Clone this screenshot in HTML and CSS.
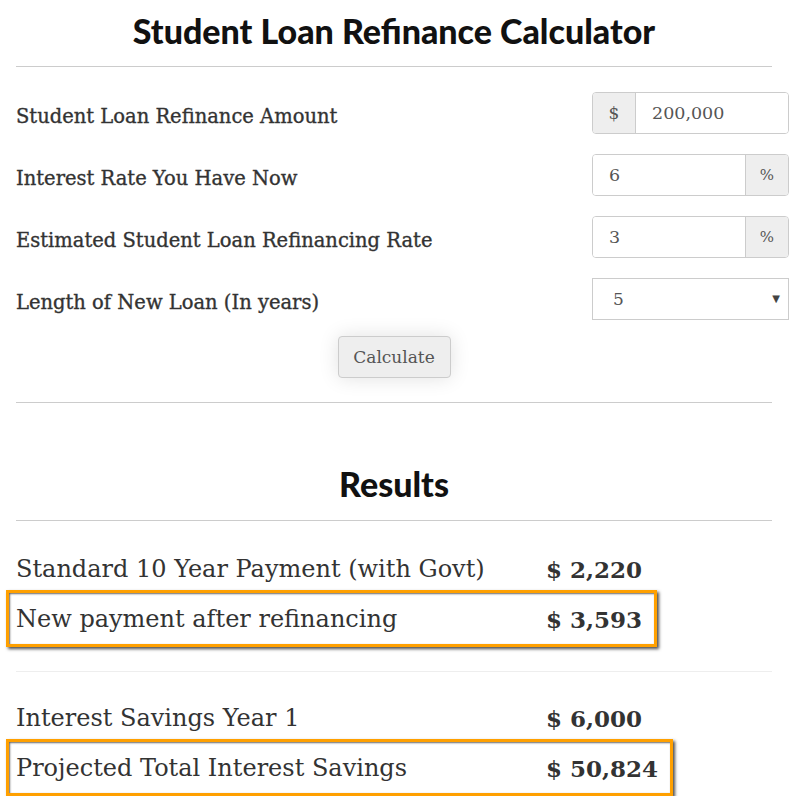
FILE: index.html
```html
<!DOCTYPE html>
<html lang="en">

<head>
    <meta charset="UTF-8">
    <meta name="viewport" content="width=device-width, initial-scale=1.0">
    <title>Student Loan Refinance Calculator</title>
    <link rel="stylesheet" href="styles.css">
</head>

<body>
    <div class="calculator">
        <h1 class="title">Student Loan Refinance Calculator</h1>
        <hr>

        <form class="calc-form">
            <div class="field">
                <label>Student Loan Refinance Amount</label>
                <div class="input-group">
                    <span class="addon">$</span>
                    <input type="text" value="200,000">
                </div>
            </div>
            <div class="field">
                <label>Interest Rate You Have Now</label>
                <div class="input-group">
                    <input type="text" value="6">
                    <span class="addon">%</span>
                </div>
            </div>
            <div class="field">
                <label>Estimated Student Loan Refinancing Rate</label>
                <div class="input-group">
                    <input type="text" value="3">
                    <span class="addon">%</span>
                </div>
            </div>
            <div class="field">
                <label>Length of New Loan (In years)</label>
                <div class="select-box">
                    <span class="select-value">5</span>
                    <span class="select-arrow">&#9660;</span>
                </div>
            </div>
            <div class="actions">
                <button type="button" class="btn">Calculate</button>
            </div>
        </form>

        <hr>

        <h2 class="title results-title">Results</h2>
        <hr>

        <div class="results">
            <div class="result">
                <span class="result-label">Standard 10 Year Payment (with Govt)</span>
                <span class="result-value">$ 2,220</span>
            </div>
            <div class="result highlight">
                <span class="result-label">New payment after refinancing</span>
                <span class="result-value">$ 3,593</span>
            </div>
            <hr class="light">
            <div class="result">
                <span class="result-label">Interest Savings Year 1</span>
                <span class="result-value">$ 6,000</span>
            </div>
            <div class="result highlight">
                <span class="result-label">Projected Total Interest Savings</span>
                <span class="result-value">$ 50,824</span>
            </div>
        </div>
    </div>
</body>

</html>
```

FILE: styles.css
```css
body {
    margin: 0;
    padding: 0;
    background: #fff;
    color: #333;
    font-family: "DejaVu Serif", "Liberation Serif", serif;
}

.calculator {
    width: 756px;
    padding: 0 16px;
}

.title {
    margin: 11px 0 14px;
    font-family: Lato, "Open Sans", sans-serif;
    font-size: 34px;
    font-weight: 900;
    line-height: 1.2;
    text-align: center;
    color: #111;
}

hr {
    margin: 0;
    border: none;
    border-top: 1px solid #ccc;
}

hr.light {
    border-top-color: #eee;
    margin: 24px 0 28px;
}

/* formulier */
.calc-form {
    display: flex;
    flex-direction: column;
    gap: 20px;
    padding: 25px 0 24px;
    margin-right: -17px;
}

.field {
    display: flex;
    justify-content: space-between;
    align-items: center;
}

.field label {
    padding-top: 8px;
    font-size: 19.5px;
    font-weight: 400;
    color: #333;
    -webkit-text-stroke: 0.35px #333;
}

.input-group {
    display: flex;
    width: 195px;
    height: 40px;
    border: 1px solid #ccc;
    border-radius: 4px;
    overflow: hidden;
}

.input-group input {
    flex: 1;
    min-width: 0;
    border: none;
    padding: 0 16px;
    font-family: inherit;
    font-size: 17.5px;
    color: #555;
    outline: none;
}

.addon {
    width: 42px;
    display: flex;
    align-items: center;
    justify-content: center;
    background: #eee;
    color: #555;
    font-size: 17px;
}

.addon:first-child {
    border-right: 1px solid #ccc;
}

.addon:last-child {
    border-left: 1px solid #ccc;
    font-size: 15px;
}

.select-box {
    display: flex;
    align-items: center;
    justify-content: space-between;
    border: 1px solid #ccc;
    padding: 0 8px 0 20px;
    box-sizing: border-box;
    width: 197px;
    height: 42px;
    font-size: 17px;
    color: #555;
}

.select-arrow {
    font-size: 10px;
    color: #444;
}

.actions {
    display: flex;
    justify-content: center;
    margin-top: -4px;
    margin-right: 17px;
}

.btn {
    width: 113px;
    height: 42px;
    background: #eee;
    border: 1px solid #ccc;
    border-radius: 4px;
    font-family: inherit;
    font-size: 17px;
    color: #555;
    box-shadow: 0 0 20px rgba(0, 0, 0, 0.12);
    cursor: pointer;
}

.results-title {
    margin: 61px 0 15px;
}

/* resultaten */
.results {
    padding-top: 30px;
    font-size: 24px;
    line-height: 37px;
}

.result {
    display: flex;
}

.result-label {
    width: 530px;
}

.result-value {
    font-weight: 700;
    font-size: 23px;
    padding-right: 12px;
}

.result.highlight {
    display: inline-flex;
    margin: 2px 0 0 -10px;
    padding: 8px 0 6px 7px;
    border: 3px solid #ffa000;
    box-shadow: 2px 2px 3px rgba(0, 0, 0, 0.7), inset 1px 1px 2px rgba(0, 0, 0, 0.6);
}
```
